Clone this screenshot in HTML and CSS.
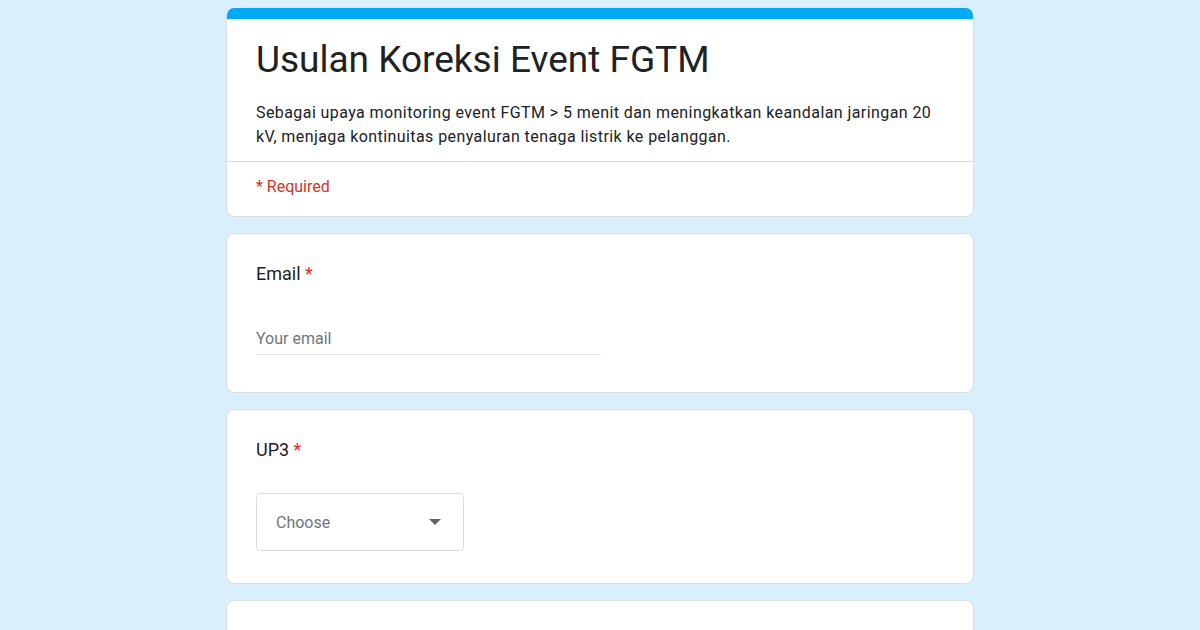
FILE: index.html
```html
<!DOCTYPE html>
<html lang="id">
<head>
<meta charset="utf-8">
<title>Usulan Koreksi Event FGTM</title>
<link rel="stylesheet" href="styles.css">
</head>
<body>
<main class="form">
  <section class="card header-card">
    <div class="header-bar"></div>
    <div class="header-body">
      <h1 class="title">Usulan Koreksi Event FGTM</h1>
      <p class="desc">Sebagai upaya monitoring event FGTM &gt; 5 menit dan meningkatkan keandalan jaringan 20 kV, menjaga kontinuitas penyaluran tenaga listrik ke pelanggan.</p>
    </div>
    <div class="required-note">* Required</div>
  </section>

  <section class="card question email-q">
    <div class="q-label">Email <span class="star">*</span></div>
    <div class="text-input">Your email</div>
  </section>

  <section class="card question up3-q">
    <div class="q-label">UP3 <span class="star">*</span></div>
    <div class="select">
      <span class="select-text">Choose</span>
      <svg class="select-arrow" width="12" height="6" viewBox="0 0 12 6"><path d="M0 0h12L6 6z" fill="#5f6368"/></svg>
    </div>
  </section>

  <section class="card question next-q"></section>
</main>
</body>
</html>
```

FILE: styles.css
```css
html, body {
  margin: 0;
  padding: 0;
}
body {
  background: #d9effc;
  font-family: Roboto, "Liberation Sans", Arial, sans-serif;
  color: #202124;
  overflow: hidden;
  height: 630px;
}
.form {
  width: 748px;
  margin: 8px auto 0;
  display: flex;
  flex-direction: column;
  gap: 16px;
}
.card {
  background: #fff;
  border: 1px solid #dadce0;
  border-radius: 8px;
  box-sizing: border-box;
}
.header-card {
  border-top: none;
  overflow: hidden;
}
.header-bar {
  height: 11px;
  background: #03a9f4;
}
.header-body {
  padding: 13px 29px 12px;
  border-bottom: 1px solid #dadce0;
}
.title {
  margin: 0;
  font-weight: 400;
  font-size: 37px;
  line-height: 56px;
  letter-spacing: 0;
  color: #202124;
}
.desc {
  margin: 13px 0 0;
  font-size: 16px;
  line-height: 24px;
  color: #202124;
  letter-spacing: 0.42px;
}
.required-note {
  padding: 13px 29px 17px;
  font-size: 16px;
  line-height: 24px;
  color: #d93025;
}
.question {
  padding: 28px 29px 0;
}
.q-label {
  font-size: 18px;
  line-height: 24px;
  color: #202124;
}
.star {
  color: #d93025;
}
.email-q {
  height: 160px;
}
.text-input {
  margin-top: 41px;
  width: 345px;
  font-size: 16px;
  line-height: 24px;
  color: #70757a;
  padding-bottom: 3px;
  border-bottom: 1px solid #e0e0e0;
}
.up3-q {
  height: 175px;
}
.select {
  margin-top: 31px;
  width: 208px;
  height: 58px;
  box-sizing: border-box;
  border: 1px solid #dadce0;
  border-radius: 4px;
  display: flex;
  align-items: center;
  justify-content: space-between;
  padding: 0 22px 0 19px;
}
.select-text {
  font-size: 16px;
  color: #70757a;
}
.next-q {
  height: 60px;
}
```
